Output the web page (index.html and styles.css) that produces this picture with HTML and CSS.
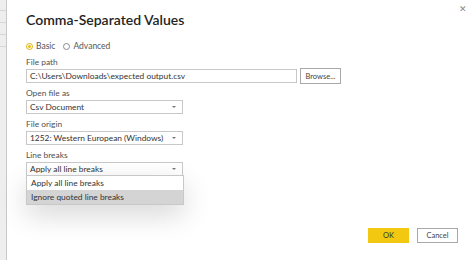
FILE: index.html
```html
<!DOCTYPE html>
<html lang="en">
<head>
  <meta charset="UTF-8">
  <title>Comma-Separated Values</title>
  <link rel="stylesheet" href="styles.css">
</head>
<body>

<div class="page">
  <div class="sheet">
    <div class="row"></div>
    <div class="row"></div>
    <div class="row"></div>
    <div class="row"></div>
  </div>

  <div class="dialog">
    <button class="close-btn">&#x2715;</button>
    <h1>Comma-Separated Values</h1>

    <div class="mode">
      <label class="radio"><span class="dot checked"></span>Basic</label>
      <label class="radio"><span class="dot"></span>Advanced</label>
    </div>

    <div class="field">
      <div class="label">File path</div>
      <div class="path-row">
        <div class="input wide">C:\Users\Downloads\expected output.csv</div>
        <button class="browse">Browse...</button>
      </div>
    </div>

    <div class="field">
      <div class="label">Open file as</div>
      <div class="input select">Csv Document<span class="caret"></span></div>
    </div>

    <div class="field">
      <div class="label">File origin</div>
      <div class="input select">1252: Western European (Windows)<span class="caret"></span></div>
    </div>

    <div class="field">
      <div class="label">Line breaks</div>
      <div class="dropdown">
        <div class="input select">Apply all line breaks<span class="caret"></span></div>
        <div class="options">
          <div class="option">Apply all line breaks</div>
          <div class="option hover">Ignore quoted line breaks</div>
        </div>
      </div>
    </div>

    <div class="footer">
      <button class="btn ok">OK</button>
      <button class="btn">Cancel</button>
    </div>
  </div>
</div>

</body>
</html>
```

FILE: styles.css
```css
body {
  margin: 0;
  padding: 0;
  font-family: Lato, "Open Sans", sans-serif;
  background-color: #fff;
  color: #252423;
}

.page {
  display: flex;
  height: 260px;
}

.sheet {
  width: 6px;
  background-color: #eeeeee;
  border-right: 1px solid #c9c9c9;
  padding-top: 10px;
}

.sheet .row {
  height: 11px;
  border-top: 1px solid #d6d6d6;
}

.dialog {
  position: relative;
  flex: 1;
  display: flex;
  flex-direction: column;
  padding: 9px 16px 17px 19px;
}

.close-btn {
  position: absolute;
  top: 3px;
  right: 1px;
  background: transparent;
  border: none;
  color: #888;
  font-size: 9px;
  cursor: pointer;
}

h1 {
  margin: 0;
  font-size: 14px;
  font-weight: 600;
  line-height: 22px;
  color: #252423;
}

.mode {
  display: flex;
  gap: 8px;
  margin-top: 9px;
  font-size: 8.5px;
  color: #555;
}

.radio {
  display: flex;
  align-items: center;
  gap: 3px;
  line-height: 12px;
}

.dot {
  width: 5px;
  height: 5px;
  border: 1px solid #8a8a8a;
  border-radius: 50%;
  position: relative;
}

.dot.checked {
  border-color: #d9b310;
}

.dot.checked::after {
  content: "";
  position: absolute;
  top: 1px;
  left: 1px;
  width: 3px;
  height: 3px;
  border-radius: 50%;
  background-color: #e8be13;
}

.field {
  margin-top: 3px;
  font-size: 8.4px;
}

.label {
  color: #505050;
  line-height: 14px;
}

.path-row {
  display: flex;
  gap: 3px;
  height: 14px;
}

.input {
  box-sizing: border-box;
  height: 14px;
  border: 1px solid #c8c8c8;
  padding: 0 3px;
  line-height: 12px;
  color: #333;
  background: #fff;
  position: relative;
  white-space: nowrap;
  overflow: hidden;
}

.input.wide {
  width: 271px;
}

.select {
  width: 157px;
}

.caret {
  position: absolute;
  right: 6px;
  top: 5px;
  width: 0;
  height: 0;
  border-left: 2px solid transparent;
  border-right: 2px solid transparent;
  border-top: 2px solid #777;
}

.browse {
  box-sizing: border-box;
  height: 16px;
  width: 41px;
  margin-top: -1px;
  padding: 0;
  border: 1px solid #a8a8a8;
  background: #fff;
  font-family: inherit;
  font-size: 7.5px;
  color: #444;
}

.dropdown {
  position: relative;
}

.options {
  position: absolute;
  top: 13px;
  left: 0;
  width: 158px;
  box-sizing: border-box;
  border: 1px solid #c8c8c8;
  background: #fff;
  box-shadow: 0 10px 28px rgba(0, 0, 0, 0.16);
  z-index: 1;
}

.option {
  height: 14px;
  line-height: 14px;
  padding: 0 4px;
  color: #333;
}

.option.hover {
  background-color: #d4d4d4;
}

.footer {
  margin-top: auto;
  display: flex;
  justify-content: flex-end;
  gap: 8px;
}

.btn {
  box-sizing: border-box;
  width: 41px;
  height: 15px;
  padding: 0;
  border: 1px solid #a8a8a8;
  background: #fff;
  font-family: inherit;
  font-size: 7.5px;
  color: #444;
}

.btn.ok {
  background-color: #f2c811;
  border-color: #f2c811;
  color: #333;
}
```
